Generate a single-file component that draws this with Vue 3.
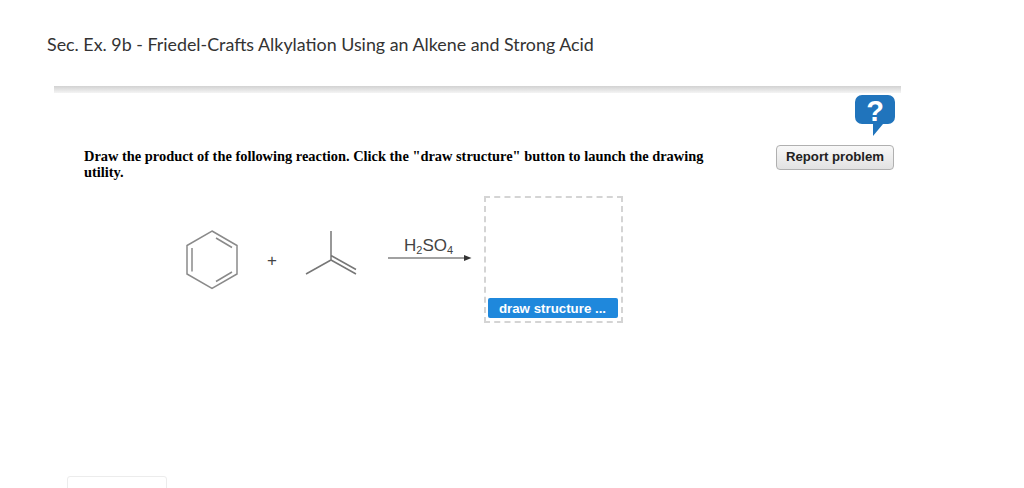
<script setup>
const title = 'Sec. Ex. 9b - Friedel-Crafts Alkylation Using an Alkene and Strong Acid'
const prompt = 'Draw the product of the following reaction. Click the "draw structure" button to launch the drawing utility.'
</script>

<template>
  <div class="page">
    <h1 class="title">{{ title }}</h1>
    <div class="panel">
      <div class="bar"></div>
      <div class="help-row">
        <svg class="help" width="40" height="41" viewBox="0 0 40 41">
          <path d="M7 0H33A7 7 0 0 1 40 7V22A7 7 0 0 1 33 29H28L18 41V29H7A7 7 0 0 1 0 22V7A7 7 0 0 1 7 0Z" fill="#2074bc"/>
          <text x="20" y="26" text-anchor="middle" class="qmark">?</text>
        </svg>
      </div>
      <div class="question">
        <p class="prompt">{{ prompt }}</p>
        <button class="report">Report problem</button>
      </div>
    </div>
    <div class="reaction">
      <svg class="scheme" width="300" height="80" viewBox="180 225 300 80">
        <g fill="none" stroke="#8a8a8a" stroke-width="1.500">
          <path d="M212 232L237 246.500V275L212 289.500L187 275V246.500Z"/>
          <path d="M216 239L232 248.500M232 273L216 282.500M192 249V272.500"/>
          <path d="M331 232V261M331 261L306 275M331 261L356 275M331 256.500L356 270.500" stroke="#777"/>
        </g>
        <text x="272" y="267" text-anchor="middle" class="chem plus">+</text>
        <text x="404" y="252" class="chem">H<tspan class="sub" dy="3">2</tspan><tspan dy="-3">SO</tspan><tspan class="sub" dy="3">4</tspan></text>
        <path d="M388 259H466" stroke="#444" stroke-width="1.200"/>
        <path d="M471.500 259L464 256V262Z" fill="#333"/>
      </svg>
      <div class="dropbox">
        <button class="draw">draw structure ...</button>
      </div>
    </div>
    <div class="stub"></div>
  </div>
</template>

<style scoped>
.page {
  position: relative;
  width: 1024px;
  height: 488px;
  overflow: hidden;
  background: #fff;
}
.title {
  margin: 0;
  padding: 34px 0 0 47px;
  height: 86px;
  box-sizing: border-box;
  font: 400 17.850px/21px Lato, "Liberation Sans", sans-serif;
  color: #333;
}
.panel {
  width: 847px;
  margin-left: 54px;
}
.bar {
  height: 7px;
  background: linear-gradient(#d2d2d2, #f4f4f4);
}
.help-row {
  display: flex;
  justify-content: flex-end;
  height: 52px;
  padding-top: 2px;
  padding-right: 6px;
  box-sizing: border-box;
  width: 847px;
}
.help { display: block; }
.qmark {
  font: 700 29px "Liberation Sans", sans-serif;
  fill: #fff;
}
.question {
  display: flex;
  justify-content: space-between;
  align-items: flex-start;
  padding-left: 30px;
  padding-right: 7px;
}
.prompt {
  width: 640px;
  margin: 3px 0 0;
  font: 700 14.420px/16px "Liberation Serif", serif;
  color: #000;
}
.report {
  width: 118px;
  height: 25px;
  padding: 0 0 3px;
  border: 1px solid #b0b0b0;
  border-radius: 4px;
  background: linear-gradient(#f8f8f8, #e2e2e2);
  font: 700 13.200px "Liberation Sans", sans-serif;
  color: #222;
}
.reaction {
  display: flex;
  align-items: flex-start;
  margin-top: 16px;
  margin-left: 180px;
}
.scheme { display: block; margin-top: 28px; flex: none; }
.chem {
  font: 400 17px "Liberation Sans", sans-serif;
  fill: #444;
}
.plus { font-size: 17px; }
.sub { font-size: 11px; }
.dropbox {
  display: flex;
  align-items: flex-end;
  justify-content: center;
  width: 139px;
  height: 127px;
  margin-left: 4px;
  padding: 0 2px 3px 0;
  box-sizing: border-box;
  border: 2px dashed #d4d4d4;
}
.draw {
  width: 130px;
  height: 20px;
  padding: 0;
  border: none;
  border-radius: 2px;
  background: #1f88dc;
  color: #fff;
  font: 700 13.300px "Liberation Sans", sans-serif;
}
.stub {
  position: absolute;
  left: 67px;
  top: 476px;
  width: 98px;
  height: 20px;
  border: 1px solid #ececec;
  border-radius: 3px;
}
</style>
